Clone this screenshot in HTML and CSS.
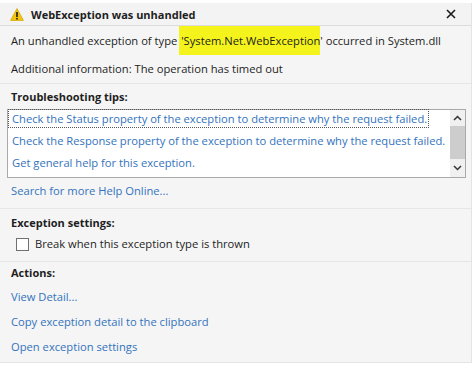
FILE: index.html
```html
<!DOCTYPE html>
<html lang="en">
<head>
    <meta charset="UTF-8">
    <title>WebException was unhandled</title>
    <link rel="stylesheet" href="styles.css">
</head>
<body>
    <div class="dialog">
        <div class="titlebar">
            <svg class="warn" width="14" height="13" viewBox="0 0 14 13">
                <path d="M7 0.6 L13.4 12.4 L0.6 12.4 Z" fill="#f2c511" stroke="#d9a400" stroke-width="0.8" stroke-linejoin="round"/>
                <rect x="6.2" y="4" width="1.6" height="5" fill="#1a1a1a"/>
                <rect x="6.2" y="10" width="1.6" height="1.5" fill="#1a1a1a"/>
            </svg>
            <span class="title">WebException was unhandled</span>
            <svg class="close" width="10" height="10" viewBox="0 0 10 10">
                <path d="M1 1 L9 9 M9 1 L1 9" stroke="#1a1a1a" stroke-width="1.6"/>
            </svg>
        </div>

        <div class="section first">
            <p class="line">An unhandled exception of type <span class="mark">'System.Net.WebException</span>' occurred in System.dll</p>
            <p class="line">Additional information: The operation has timed out</p>
        </div>

        <div class="section tips-section">
            <h3>Troubleshooting tips:</h3>
            <div class="tips">
                <div class="tips-list">
                    <a class="tip focused">Check the Status property of the exception to determine why the request failed.</a>
                    <a class="tip">Check the Response property of the exception to determine why the request failed.</a>
                    <a class="tip">Get general help for this exception.</a>
                </div>
                <div class="scrollbar">
                    <svg class="arrow" width="15" height="16" viewBox="0 0 15 16">
                        <path d="M4 10 L7.5 6.5 L11 10" fill="none" stroke="#333" stroke-width="1.5"/>
                    </svg>
                    <span class="thumb"></span>
                    <svg class="arrow" width="15" height="18" viewBox="0 0 15 18">
                        <path d="M4 7 L7.5 10.5 L11 7" fill="none" stroke="#333" stroke-width="1.5"/>
                    </svg>
                </div>
            </div>
            <a class="link search">Search for more Help Online...</a>
        </div>

        <div class="section settings">
            <h3>Exception settings:</h3>
            <label class="check"><span class="box"></span>Break when this exception type is thrown</label>
        </div>

        <div class="section actions">
            <h3>Actions:</h3>
            <a class="link">View Detail...</a>
            <a class="link">Copy exception detail to the clipboard</a>
            <a class="link">Open exception settings</a>
        </div>
    </div>
</body>
</html>
```

FILE: styles.css
```css
body {
    margin: 0;
    background: #ffffff;
    font-family: "Open Sans", "Noto Sans", sans-serif;
    font-size: 11.2px;
    color: #1e1e1e;
}

.dialog {
    margin-top: 3px;
    width: 472px;
    height: 360px;
    background: #f5f5f5;
    border-right: 1px solid #e4e4e4;
    border-bottom: 1px solid #e4e4e4;
    box-sizing: border-box;
}

/* Title bar */
.titlebar {
    display: flex;
    align-items: center;
    height: 22px;
    padding: 0 15px 0 10px;
    background: #f3f3f3;
    border-bottom: 1px solid #dcdcdc;
}

.warn {
    margin-right: 7px;
}

.title {
    flex: 1;
    font-weight: bold;
    font-size: 11px;
}

/* Sections */
.section {
    padding: 0 11px;
    border-bottom: 1px solid #e6e6e6;
}

.section.first {
    padding-top: 1px;
}

.section.tips-section {
    padding-bottom: 5px;
}

.section.settings {
    padding-top: 3px;
    padding-bottom: 7px;
}

.section.actions {
    border-bottom: none;
}

.line {
    margin: 0;
    line-height: 28px;
}

.mark {
    background: #f4f31c;
    padding: 7px 0 7px 2px;
    margin-left: -1px;
}

h3 {
    margin: 0;
    font-size: 11px;
    font-weight: bold;
    line-height: 22px;
}

.tips-section h3 {
    padding-top: 2px;
    margin-bottom: 1px;
}

/* Tips list box */
.tips {
    display: flex;
    margin-left: -4px;
    width: 457px;
    height: 67px;
    background: #fff;
    border: 1px solid #a9a9a9;
}

.tips-list {
    flex: 1;
    display: flex;
    flex-direction: column;
    align-items: flex-start;
}

.tip {
    color: #3373bd;
    line-height: 17px;
    padding: 0 1px 0 3px;
    margin-left: 1px;
    margin-bottom: 5px;
    white-space: nowrap;
}

.tip.focused {
    outline: 1px dotted #555;
}

.scrollbar {
    width: 15px;
    display: flex;
    flex-direction: column;
    background: #f0f0f0;
}

.arrow {
    display: block;
}

.thumb {
    flex: 1;
    background: #cdcdcd;
}

.link {
    display: block;
    color: #3373bd;
    line-height: 25px;
}

.search {
    line-height: 24px;
    margin-top: 1px;
}

.check {
    display: flex;
    align-items: center;
    padding-left: 5px;
    line-height: 20px;
}

.box {
    width: 11px;
    height: 11px;
    border: 1px solid #707070;
    background: #fff;
    margin-right: 6px;
}
```
